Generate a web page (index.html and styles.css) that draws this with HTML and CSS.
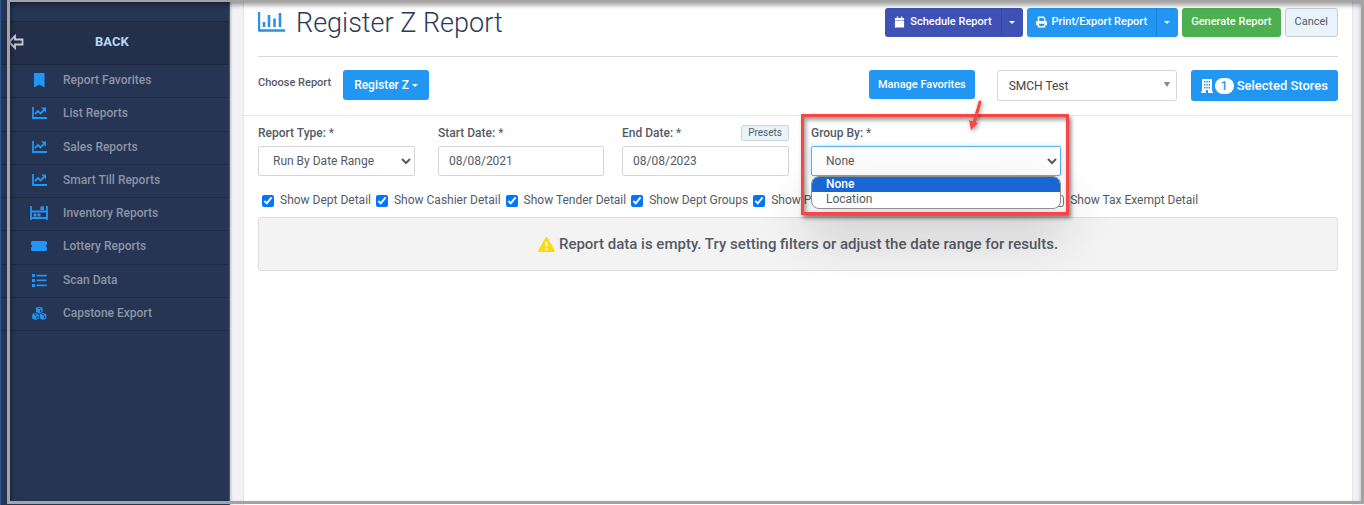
FILE: index.html
```html
<!DOCTYPE html>
<html lang="en-US">
<head>
	<meta charset="UTF-8">
	<title>Register Z Report</title>
	<link rel="stylesheet" href="styles.css">
</head>
<body>
<svg class="sprite" aria-hidden="true">
	<symbol id="chart-line" viewBox="0 0 15 12">
		<path d="M1 0v11h14M3 7l3-3 2.500 2.500L12 3" fill="none" stroke="currentColor" stroke-width="1.800"/>
		<path d="M9 .5h5v5z" fill="currentColor"/>
	</symbol>
	<symbol id="cube" viewBox="0 0 8 8">
		<path d="M4 0l3.800 1.500v4.800L4 8 .2 6.300V1.500z" fill="currentColor"/>
		<path d="M1.800 2L4 1.300 6.200 2 4 2.800z" fill="#263554"/>
		<path d="M4.800 4.200l1.700-.7v2.200l-1.700.8z" fill="#263554"/>
	</symbol>
</svg>

<nav class="sidebar">
	<a class="back" href="#">
		<svg class="back-arrow" viewBox="0 0 16 16"><path d="M1 8l6-6v3.500h7.500v5H7V14z" fill="none" stroke="currentColor" stroke-width="1.800"/></svg>
		<span>BACK</span>
	</a>
	<ul class="menu">
		<li><a href="#"><svg class="icon" viewBox="0 0 18 16"><path d="M4 1h10.500v14.500L9.250 12.500 4 15.500z" fill="currentColor"/></svg>Report Favorites</a></li>
		<li><a href="#"><svg class="icon icon-small"><use href="#chart-line"/></svg>List Reports</a></li>
		<li><a href="#"><svg class="icon icon-small"><use href="#chart-line"/></svg>Sales Reports</a></li>
		<li><a href="#"><svg class="icon icon-small"><use href="#chart-line"/></svg>Smart Till Reports</a></li>
		<li><a href="#"><svg class="icon" viewBox="0 0 18 16"><path d="M1 1v14M17 1v14M1 6.500h16M1 13h16" fill="none" stroke="currentColor" stroke-width="1.800"/><path d="M10.500 1.500H14v3.500h-3.500zM3.500 8.500h3v3h-3zM7.500 8.500h3v3h-3z" fill="currentColor"/></svg>Inventory Reports</a></li>
		<li><a href="#"><svg class="icon" viewBox="0 0 18 16"><path d="M2.500 3h13q1.500 0 1.500 1.500v2a1.600 1.600 0 0 0 0 3v2q0 1.500-1.500 1.500h-13Q1 13 1 11.500v-2a1.600 1.600 0 0 0 0-3v-2Q1 3 2.500 3z" fill="currentColor"/></svg>Lottery Reports</a></li>
		<li><a href="#"><svg class="icon" viewBox="0 0 18 16"><path d="M2 2h3v3H2zM2 7h3v3H2zM2 12h3v3H2zM6.500 2.700h10.200v1.700H6.500zM6.500 7.600h10.200v1.700H6.500zM6.500 12.600h10.200v1.700H6.500z" fill="currentColor"/></svg>Scan Data</a></li>
		<li><a href="#"><svg class="icon" viewBox="0 0 18 16"><use href="#cube" x="5.500" y="1.500" width="7.500" height="7"/><use href="#cube" x="1.700" y="8" width="7.500" height="7"/><use href="#cube" x="9.300" y="8" width="7.500" height="7"/></svg>Capstone Export</a></li>
	</ul>
</nav>

<main class="page">
	<header class="page-header">
		<h1 class="title">
			<svg class="title-icon" viewBox="0 0 28 22"><path d="M1 1v18.500h26" fill="none" stroke="currentColor" stroke-width="2.400" stroke-linejoin="round"/><path d="M6 11v5M11 4v12M16.500 7.500v8.500M22 2v14" fill="none" stroke="currentColor" stroke-width="2.600"/></svg>
			Register Z Report
		</h1>
		<div class="actions">
			<div class="split indigo">
				<button class="btn" type="button"><svg class="btn-icon" viewBox="0 0 12 12"><path d="M1 1.500h2V0h1.500v1.500h3V0H9v1.500h2V4H1zM1 4.700h10V12H1z" fill="currentColor"/></svg>Schedule Report</button>
				<button class="btn toggle" type="button" aria-label="Schedule options"><span class="caret"></span></button>
			</div>
			<div class="split blue">
				<button class="btn" type="button"><svg class="btn-icon" viewBox="0 0 12 12"><path d="M2.700 5V.8h5.500l1.300 1.300V5M2.700 8.500v2.700h6.600V8.500" fill="none" stroke="currentColor" stroke-width="1.500"/><path d="M1.500 5h9Q12 5 12 6.500V9.500h-2V8H2v1.500H0v-3Q0 5 1.500 5z" fill="currentColor"/></svg>Print/Export Report</button>
				<button class="btn toggle" type="button" aria-label="Export options"><span class="caret"></span></button>
			</div>
			<button class="btn green" type="button">Generate Report</button>
			<button class="btn light" type="button">Cancel</button>
		</div>
	</header>

	<section class="chooser">
		<span class="choose-label">Choose Report</span>
		<button class="btn blue report-btn" type="button">Register Z<span class="caret"></span></button>
		<button class="btn blue favorites-btn" type="button">Manage Favorites</button>
		<div class="store-select">
			<select aria-label="Store group"><option>SMCH Test</option></select>
			<span class="store-arrow"></span>
		</div>
		<button class="btn blue stores-btn" type="button">
			<svg class="building" viewBox="0 0 12 14"><path fill-rule="evenodd" d="M1 0h10v12.500h1V14H7v-3H5v3H0v-1.500h1zM3 2v1.500h1.500V2zM5.300 2v1.500h1.500V2zM7.600 2v1.500H9V2zM3 5v1.500h1.500V5zM5.300 5v1.500h1.500V5zM7.600 5v1.500H9V5zM3 8v1.500h1.500V8zM5.300 8v1.500h1.500V8zM7.600 8v1.500H9V8z" fill="currentColor"/></svg>
			<span class="count">1</span>
			Selected Stores
		</button>
	</section>

	<form class="filters">
		<div class="fields">
			<div class="field field-type">
				<label for="type">Report Type: <i>*</i></label>
				<select id="type" class="control"><option>Run By Date Range</option></select>
			</div>
			<div class="field field-start">
				<label for="start">Start Date: <i>*</i></label>
				<input id="start" class="control" type="text" value="08/08/2021">
			</div>
			<div class="field field-end">
				<div class="label-row">
					<label for="end">End Date: <i>*</i></label>
					<button class="presets" type="button">Presets</button>
				</div>
				<input id="end" class="control" type="text" value="08/08/2023">
			</div>
			<div class="field field-group">
				<label for="group">Group By: <i>*</i></label>
				<select id="group" class="control active"><option>None</option><option>Location</option></select>
				<ul class="options" role="listbox" aria-label="Group By">
					<li class="selected" role="option" aria-selected="true">None</li>
					<li role="option" aria-selected="false">Location</li>
				</ul>
				<div class="callout"></div>
				<svg class="pointer" viewBox="0 0 16 34"><path d="M12 3L6 24" stroke="currentColor" stroke-width="3" stroke-linecap="round"/><path d="M1 21l9 3-7 7z" fill="currentColor"/></svg>
			</div>
		</div>

		<div class="checks">
			<label><input type="checkbox" checked>Show Dept Detail</label>
			<label><input type="checkbox" checked>Show Cashier Detail</label>
			<label><input type="checkbox" checked>Show Tender Detail</label>
			<label><input type="checkbox" checked>Show Dept Groups</label>
			<label class="wide"><input type="checkbox" checked>Show Pa</label>
			<label><input type="checkbox">Show Tax Exempt Detail</label>
		</div>
	</form>

	<div class="empty">
		<svg class="warning" viewBox="0 0 18 16"><path d="M9 0q.8 0 1.200.8l7.500 13q.6 1.700-1 2.200H1.300q-1.600-.5-1-2.200l7.500-13Q8.200 0 9 0z" fill="currentColor"/><path d="M9 5v5M9 12v2" stroke="#fff" stroke-width="2"/></svg>
		Report data is empty. Try setting filters or adjust the date range for results.
	</div>
</main>

<div class="frame"></div>
</body>
</html>
```

FILE: styles.css
```css
:root {
	--blue: #2196f3;
	--indigo: #3f51b5;
	--green: #4caf50;
	--navy: #263554;
	--text: #555b66;
	--line: #d5d6d8;
	--red: #fc4444;
}

* {
	box-sizing: border-box;
}

body {
	display: flex;
	min-height: 100vh;
	margin: 0;
	font: 12px/16px Roboto, sans-serif;
	color: var(--text);
	background: #f2f1f6;
}

button, input, select {
	font: inherit;
	color: inherit;
}

.sprite {
	position: absolute;
	width: 0;
	height: 0;
}

/* sidebar */

.sidebar {
	flex: none;
	width: 230px;
	padding-top: 21px;
	background: var(--navy);
	border-left: 1px solid #2d5a8c;
	border-right: 1px solid #3a5f8d;
	box-shadow: 1px 0 2px #bbb;
}

.back {
	display: flex;
	align-items: center;
	height: 44px;
	padding: 0 0 2px 7px;
	border: solid #1d2940;
	border-width: 1px 0;
	background: #232f4b;
	color: #b3d9f7;
	font-size: 13px;
	font-weight: 700;
	text-decoration: none;
}

.back-arrow {
	width: 16px;
	height: 16px;
	margin-right: 71px;
	color: #c9ccd3;
}

.menu {
	display: grid;
	grid-template-rows: repeat(8, 1fr);
	height: 266px;
	margin: 0;
	padding: 0;
	list-style: none;
}

.menu a {
	display: flex;
	align-items: center;
	gap: 15px;
	height: 100%;
	padding: 0 0 2px 29px;
	border-bottom: 1px solid #1f2b47;
	color: #8d94a4;
	font-weight: 500;
	text-decoration: none;
}

.icon {
	width: 18px;
	height: 16px;
	color: var(--blue);
}

.icon-small {
	width: 15px;
	height: 12px;
	margin: 0 1px 0 2px;
}

/* page */

.page {
	flex: 1;
	min-width: 0;
	margin: 0 12px 0 14px;
	background: #fff;
	box-shadow: 0 0 1px 1px #e6e6ea;
}

.page-header {
	display: flex;
	justify-content: space-between;
	align-items: flex-start;
	margin: 0 14px;
	padding: 8px 0 18px;
	border-bottom: 1px solid #d9d9d9;
}

.title {
	display: flex;
	gap: 10px;
	margin: 0;
	color: #2b3a5c;
	font-size: 27px;
	font-weight: 300;
	line-height: 30px;
}

.title-icon {
	width: 28px;
	height: 22px;
	margin-top: 3px;
	color: #2e8fe3;
}

.actions {
	display: flex;
	gap: 4px;
}

.split {
	display: flex;
	border-radius: 3px;
	color: #fff;
}

.btn {
	display: flex;
	align-items: center;
	justify-content: center;
	height: 29px;
	padding: 0 8px 2px;
	border: 1px solid transparent;
	border-radius: 3px;
	background: none;
	font-size: 11px;
	font-weight: 500;
	white-space: nowrap;
}

.btn-icon {
	width: 11px;
	height: 12px;
	margin-right: 5px;
}

.toggle {
	padding: 0 7px;
	border-left-color: rgb(0 0 0 / 12%);
	border-radius: 0;
}

.caret {
	border: 3px solid transparent;
	border-top-color: currentColor;
	border-bottom: 0;
}

.indigo {
	background: var(--indigo);
}

.blue {
	background: var(--blue);
	color: #fff;
}

.green {
	background: var(--green);
	color: #fff;
}

.light {
	padding: 0 9px 2px;
	border-color: #c7ccd1;
	background: #e9f3fc;
	font-weight: 400;
}

.chooser {
	display: flex;
	align-items: flex-start;
	padding: 13px 14px 14px;
	border-bottom: 1px solid #e8e8ea;
}

.choose-label {
	margin: 5px 12px 0 0;
	font-size: 11px;
	font-weight: 500;
}

.report-btn {
	gap: 3px;
	height: 30px;
	padding: 0 10px;
	font-size: 12px;
}

.favorites-btn {
	margin: 0 22px 0 auto;
	padding: 0 8px;
}

.store-select {
	position: relative;
	width: 180px;
	margin-right: 14px;
}

.store-select select {
	width: 100%;
	height: 31px;
	padding: 0 11px;
	border: 1px solid var(--line);
	border-radius: 3px;
	background: #fff;
	color: #444;
	appearance: none;
}

.store-arrow {
	position: absolute;
	top: 12px;
	right: 7px;
	border: 3px solid transparent;
	border-top: 5px solid #888;
	border-bottom: 0;
}

.stores-btn {
	height: 31px;
	padding: 0 9px;
	font-size: 13px;
}

.building {
	width: 12px;
	height: 14px;
}

.count {
	width: 19px;
	margin: 0 3px 0 2px;
	border-radius: 8px;
	background: #fff;
	color: var(--blue);
	font-size: 12px;
}

/* filters */

.filters {
	padding: 9px 14px 0;
}

.fields {
	display: flex;
}

.field {
	display: flex;
	flex-direction: column;
	gap: 5px;
}

.field label {
	font-weight: 500;
}

.field i {
	font-style: normal;
	font-weight: 400;
}

.field-type {
	width: 157px;
	margin-right: 23px;
}

.field-start {
	width: 166px;
	margin-right: 18px;
}

.field-end {
	width: 167px;
	margin-right: 22px;
}

.field-group {
	position: relative;
	width: 250px;
}

.label-row {
	display: flex;
	justify-content: space-between;
}

.presets {
	height: 16px;
	padding: 0 6px;
	border: 1px solid #cfd6dc;
	border-radius: 2px;
	background: #e9f3fc;
	font-size: 10px;
	line-height: 14px;
}

.control {
	width: 100%;
	height: 30px;
	padding: 0 10px;
	border: 1px solid var(--line);
	border-radius: 2px;
	background: #fff;
}

.active {
	border-color: #5aaef0;
	box-shadow: 0 0 5px #b9ddf9;
}

select.control {
	padding: 0 0 0 10px;
}

.options {
	position: absolute;
	z-index: 2;
	top: 51px;
	left: 0;
	right: 0;
	margin: 0;
	padding: 0 0 1px;
	overflow: hidden;
	border: 1px solid #8f8f8f;
	border-radius: 8px;
	background: #fff;
	line-height: 15px;
	list-style: none;
	box-shadow: 0 22px 50px 4px rgb(0 0 0 / 18%);
}

.options li {
	padding-left: 14px;
}

.options .selected {
	background: #1967d2;
	color: #fff;
	font-weight: 500;
}

.callout {
	position: absolute;
	z-index: 3;
	top: -11px;
	left: -10px;
	right: -8px;
	height: 101px;
	border: 3px solid var(--red);
	box-shadow: 2px 3px 4px rgb(0 0 0 / 50%), inset 2px 3px 4px rgb(0 0 0 / 40%);
	pointer-events: none;
}

.pointer {
	position: absolute;
	z-index: 4;
	top: -26px;
	left: 157px;
	width: 16px;
	height: 34px;
	color: var(--red);
	filter: drop-shadow(1px 2px 2px rgb(0 0 0 / 40%));
}

.checks {
	display: flex;
	gap: 5px;
	padding: 16px 4px 9px;
	white-space: nowrap;
}

.checks label {
	display: flex;
	align-items: center;
	gap: 6px;
}

.checks input {
	width: 12px;
	height: 12px;
	margin: 2px 0 0;
	accent-color: #0075ff;
}

.wide {
	width: 294px;
}

.empty {
	display: flex;
	align-items: center;
	justify-content: center;
	gap: 4px;
	margin: 0 14px;
	padding: 15px;
	border: 1px solid #dedfe1;
	border-radius: 3px;
	background: #f3f3f3;
	font-size: 15px;
	font-weight: 500;
	line-height: 22px;
}

.warning {
	width: 17px;
	height: 15px;
	color: #ffd90f;
}

/* gray border laid over the whole window */

.frame {
	position: fixed;
	z-index: 10;
	inset: 0 0 1px 7px;
	border: 3px solid #a3a3a3;
	border-top-width: 2px;
	box-shadow: inset 1px 3px 5px rgb(0 0 0 / 40%);
	pointer-events: none;
}
```
